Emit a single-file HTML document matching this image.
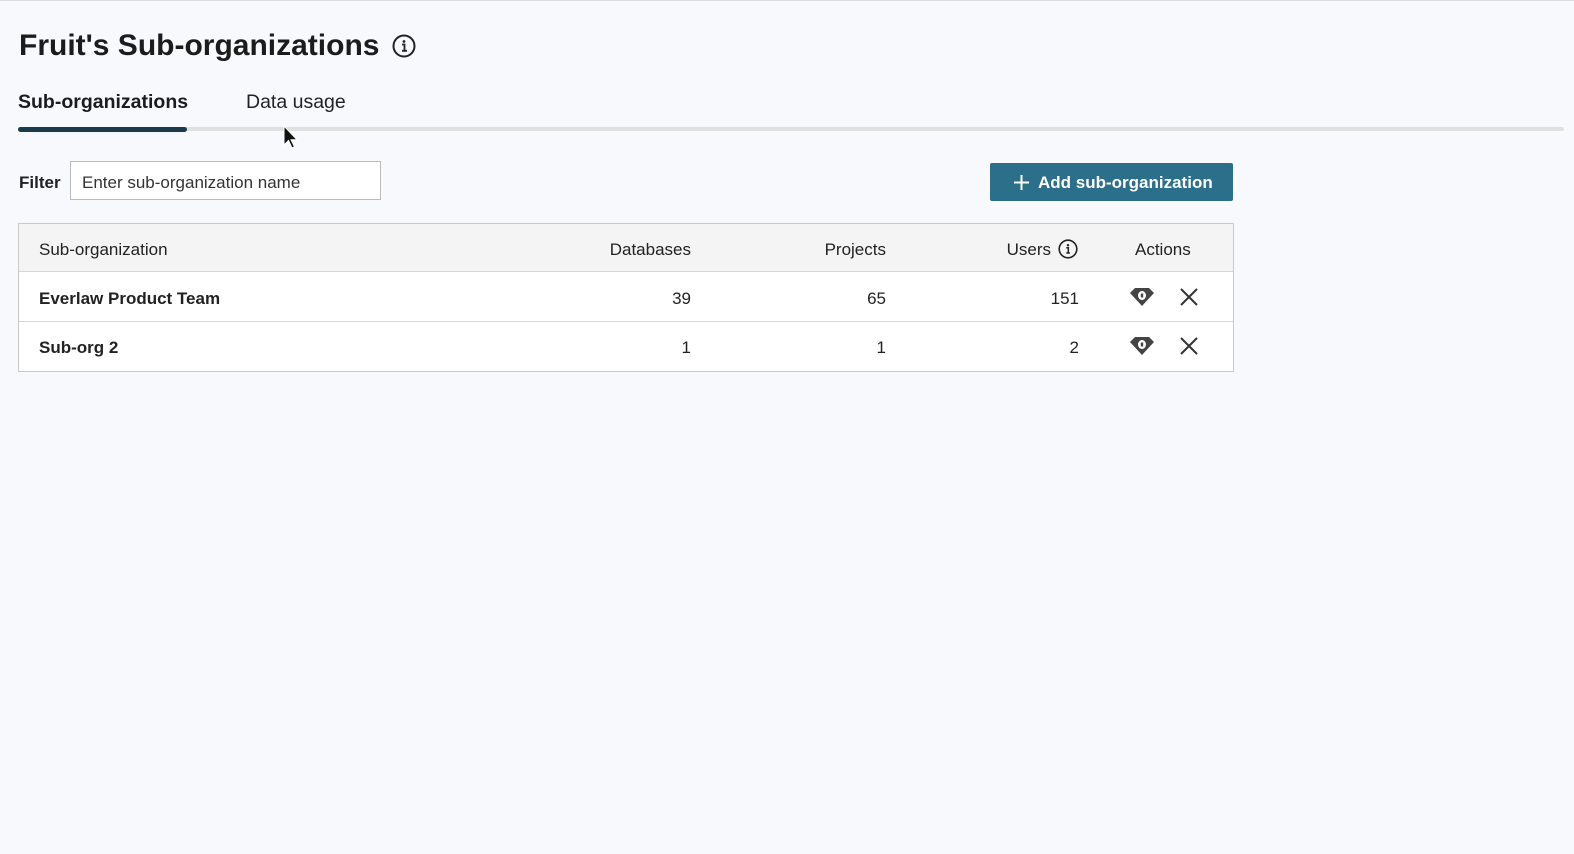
<!DOCTYPE html>
<html><head><meta charset="utf-8"><style>
body{margin:0;width:1574px;height:854px;background:#f8f9fc;font-family:"Liberation Sans",sans-serif;color:#222;position:relative;overflow:hidden}
.a{position:absolute}
h1{position:absolute;left:19px;top:29px;margin:0;font-size:30px;font-weight:bold;color:#1c1c1c;letter-spacing:0px}
.tab{font-size:19.5px;top:91px}
.tbl{position:absolute;left:18px;top:223px;width:1214px;height:147px;border:1px solid #c9c9c9;background:#fff}
.hdr{position:absolute;left:0;top:0;width:1214px;height:47px;background:#f4f4f4;border-bottom:1px solid #d6d6d6}
.t{position:absolute;font-size:17px}
.r{text-align:right}
</style></head><body>
<div class="a" style="left:0;top:0;width:1574px;height:1px;background:#ddd"></div>
<h1>Fruit's Sub-organizations</h1>
<svg class="a" style="left:391px;top:33px" width="26" height="26" viewBox="0 0 26 26"><circle cx="13" cy="13" r="10.5" fill="none" stroke="#222" stroke-width="2"/><circle cx="13" cy="8.5" r="1.4" fill="#222"/><path d="M11 11.5h2.5v6M11 17.8h5" stroke="#222" stroke-width="1.8" fill="none"/></svg>
<div class="a tab" style="left:18px;font-weight:bold;color:#1c1c1c">Sub-organizations</div>
<div class="a tab" style="left:246px;color:#222">Data usage</div>
<div class="a" style="left:18px;top:127px;width:1546px;height:4px;background:#e0e0e0;border-radius:2px"></div>
<div class="a" style="left:18px;top:127px;width:169px;height:5px;background:#1b3a4b;border-radius:3px"></div>
<svg class="a" style="left:283px;top:125px" width="16" height="26" viewBox="0 0 16 26"><path d="M1 1v19l4.5-4.5 3.5 7.5 2.5-1.2-3.5-7H14z" fill="#111" stroke="#fff" stroke-width="1"/></svg>
<div class="a" style="left:19px;top:173px;font-size:17px;font-weight:bold">Filter</div>
<div class="a" style="left:70px;top:161px;width:311px;height:39px;border:1px solid #bbb;background:#fff;box-sizing:border-box"></div>
<div class="a" style="left:82px;top:173px;font-size:17px;color:#333">Enter sub-organization name</div>
<div class="a" style="left:990px;top:163px;width:243px;height:38px;background:#2b6f8a;border-radius:2px;color:#fff;font-size:17px;font-weight:bold;box-sizing:border-box;padding-left:48px;line-height:40px">Add sub-organization</div>
<svg class="a" style="left:1013px;top:174px" width="17" height="17"><path d="M8.5 1v15M1 8.5h15" stroke="#fff" stroke-width="2"/></svg>
<div class="tbl">
<div class="hdr"></div>
<div class="a" style="left:0;top:97px;width:1214px;height:1px;background:#d6d6d6"></div>
<div class="t" style="left:20px;top:16px">Sub-organization</div>
<div class="t r" style="right:542px;top:16px">Databases</div>
<div class="t r" style="right:347px;top:16px">Projects</div>
<div class="t r" style="right:182px;top:16px">Users</div>
<svg class="a" style="left:1038px;top:14px" width="22" height="22" viewBox="0 0 22 22"><circle cx="11" cy="11" r="8.8" fill="none" stroke="#222" stroke-width="1.6"/><circle cx="11" cy="7.2" r="1.2" fill="#222"/><path d="M9.3 9.8h2v5M9.3 15h3.6" stroke="#222" stroke-width="1.5" fill="none"/></svg>
<div class="t" style="left:1116px;top:16px">Actions</div>
<div class="t" style="left:20px;top:65px;font-weight:bold">Everlaw Product Team</div>
<div class="t r" style="right:542px;top:65px">39</div>
<div class="t r" style="right:347px;top:65px">65</div>
<div class="t r" style="right:154px;top:65px">151</div>
<div class="t" style="left:20px;top:114px;font-weight:bold">Sub-org 2</div>
<div class="t r" style="right:542px;top:114px">1</div>
<div class="t r" style="right:347px;top:114px">1</div>
<div class="t r" style="right:154px;top:114px">2</div>
<svg class="a" style="left:1110px;top:62px" width="26" height="22" viewBox="0 0 26 22"><path d="M1 7l5-5h14l5 5-12 13z" fill="#444"/><ellipse cx="13" cy="9.5" rx="4" ry="4.5" fill="#fff"/><rect x="11.8" y="7.5" width="2.4" height="4" fill="#444"/></svg>
<svg class="a" style="left:1160px;top:63px" width="20" height="20"><path d="M2 2l16 16M18 2L2 18" stroke="#333" stroke-width="2"/></svg>
<svg class="a" style="left:1110px;top:111px" width="26" height="22" viewBox="0 0 26 22"><path d="M1 7l5-5h14l5 5-12 13z" fill="#444"/><ellipse cx="13" cy="9.5" rx="4" ry="4.5" fill="#fff"/><rect x="11.8" y="7.5" width="2.4" height="4" fill="#444"/></svg>
<svg class="a" style="left:1160px;top:112px" width="20" height="20"><path d="M2 2l16 16M18 2L2 18" stroke="#333" stroke-width="2"/></svg>
</div>
</body></html>
